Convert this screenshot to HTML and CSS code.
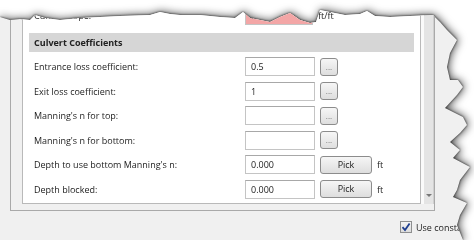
FILE: index.html
```html
<!DOCTYPE html>
<html lang="en">
<head>
  <meta charset="UTF-8" />
  <title>Culvert Coefficients</title>
  <link rel="stylesheet" href="styles.css">
</head>
<body>
  <div class="paper">
    <div class="sheet">
      <div class="frame">
        <div class="panel">
          <div class="row">
            <span class="label">Culvert slope:</span>
            <span class="field bad">NaN</span>
            <span class="unit">ft/ft</span>
          </div>
          <div class="band">Culvert Coefficients</div>
          <div class="row">
            <span class="label">Entrance loss coefficient:</span>
            <span class="field">0.5</span>
            <span class="btn dots">...</span>
          </div>
          <div class="row">
            <span class="label">Exit loss coefficient:</span>
            <span class="field">1</span>
            <span class="btn dots">...</span>
          </div>
          <div class="row">
            <span class="label">Manning's n for top:</span>
            <span class="field"></span>
            <span class="btn dots">...</span>
          </div>
          <div class="row">
            <span class="label">Manning's n for bottom:</span>
            <span class="field"></span>
            <span class="btn dots">...</span>
          </div>
          <div class="row">
            <span class="label">Depth to use bottom Manning's n:</span>
            <span class="field">0.000</span>
            <span class="btn pick">Pick</span>
            <span class="unit">ft</span>
          </div>
          <div class="row">
            <span class="label">Depth blocked:</span>
            <span class="field">0.000</span>
            <span class="btn pick">Pick</span>
            <span class="unit">ft</span>
          </div>
        </div>
        <div class="scroll"><span class="arrow"></span></div>
      </div>
      <div class="footer">
        <span class="check">
          <svg width="10" height="10" viewBox="0 0 10 10"><path d="M1.5 5.2 L4 8 L8.6 1.4" fill="none" stroke="#1f3f8f" stroke-width="1.8"/></svg>
        </span>
        <span>Use constant values</span>
      </div>
    </div>
  </div>
</body>
</html>
```

FILE: styles.css
```css
body { margin: 0; background: #fff; font-family: "Open Sans", sans-serif; font-size: 9px; color: #222; }

.paper { width: 474px; height: 240px; filter: drop-shadow(0 0 1px #222) drop-shadow(1px 0 4px rgba(0,0,0,0.7)); }
.sheet {
  width: 474px; height: 240px; background: #f0f0f0; overflow: hidden;
  clip-path: polygon(0 17px, 10px 20px, 20px 19px, 30px 20px, 35px 15px, 45px 18px, 60px 20px, 80px 18px, 100px 17px, 120px 16px, 150px 15px, 160px 12px, 170px 14px, 180px 15px, 200px 15px, 220px 17px, 235px 18px, 243px 12px, 250px 18px, 260px 20px, 270px 22px, 280px 17px, 290px 13px, 300px 20px, 310px 23px, 316px 22px, 320px 10px, 330px 12px, 345px 15px, 360px 14px, 367px 11px, 375px 16px, 390px 17px, 410px 16px, 433px 15px, 440px 22px, 447px 30px, 457px 40px, 450px 53px, 447px 67px, 450px 80px, 458px 80px, 463px 87px, 457px 95px, 445px 108px, 463px 117px, 467px 125px, 460px 133px, 450px 142px, 460px 150px, 453px 158px, 470px 167px, 460px 180px, 457px 190px, 453px 197px, 467px 203px, 460px 215px, 457px 225px, 463px 240px, 0 240px);
}

.frame {
  margin-left: 10px; width: 425px; height: 211px; box-sizing: border-box;
  border: 1px solid #a9a9a9; border-top: none;
  display: flex; padding: 0 0 6px 11px;
}
.panel {
  flex: 1; background: #fff; border: 1px solid #b9b9b9; border-top: none;
  padding: 6px 6px 0 6px;
}
.scroll {
  width: 13px; box-sizing: border-box; background: #e4e4e4;
  border-left: 3px solid #fafafa; border-right: 1px solid #cfcfcf;
  display: flex; flex-direction: column; justify-content: flex-end; align-items: center; padding-bottom: 7px;
}
.arrow { width: 0; height: 0; border-left: 3px solid transparent; border-right: 3px solid transparent; border-top: 3px solid #777; }

.row { display: flex; align-items: center; height: 19px; margin-bottom: 5.5px; }
.label { width: 211px; padding-left: 5px; }
.band {
  background: #d6d6d6; height: 19px; line-height: 19px; padding-left: 5px;
  font-weight: bold; margin: 8px 0 5px;
}
.field {
  width: 70px; height: 19px; box-sizing: border-box; border: 1px solid #c4c4c4; border-top-color: #a8a8a8;
  padding-left: 5px; line-height: 17px; background: #fff;
}
.field.bad { background: #f3a6a6; width: 68px; }
.btn {
  height: 18px; box-sizing: border-box; margin-left: 5px; border: 1px solid #8c8c8c; border-radius: 3px;
  background: linear-gradient(#f6f6f6, #dedede); text-align: center; line-height: 15px;
}
.dots { width: 18px; color: #777; font-size: 8px; }
.pick { width: 52px; line-height: 16px; }
.unit { margin-left: 5px; }

.footer { display: flex; align-items: center; height: 12px; margin-top: 10px; padding-left: 400px; gap: 4px; white-space: nowrap; }
.check {
  flex: none; width: 12px; height: 12px; box-sizing: border-box; border: 1px solid #8e8f8f; background: linear-gradient(#f4f4f4, #dcdcdc);
  display: flex; align-items: center; justify-content: center;
}
```
